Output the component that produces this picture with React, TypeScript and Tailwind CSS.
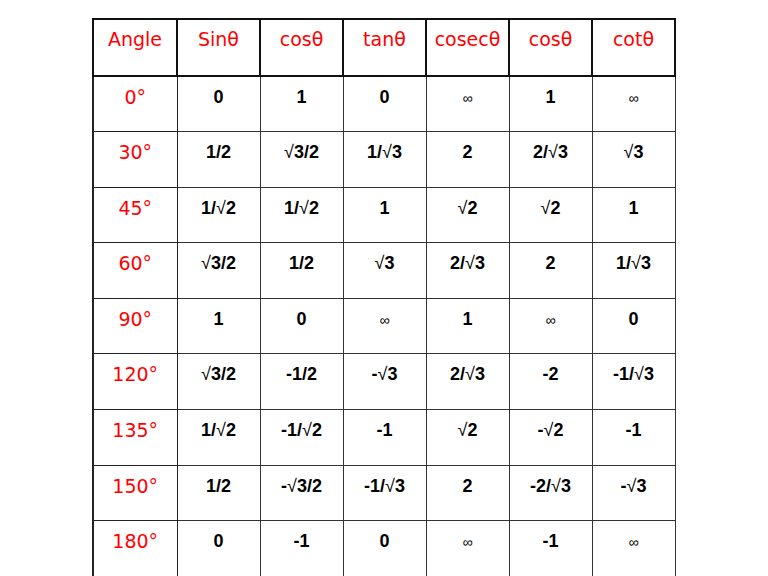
const headers = ['Angle', 'Sinθ', 'cosθ', 'tanθ', 'cosecθ', 'cosθ', 'cotθ'];

const rows: string[][] = [
  ['0°', '0', '1', '0', '∞', '1', '∞'],
  ['30°', '1/2', '√3/2', '1/√3', '2', '2/√3', '√3'],
  ['45°', '1/√2', '1/√2', '1', '√2', '√2', '1'],
  ['60°', '√3/2', '1/2', '√3', '2/√3', '2', '1/√3'],
  ['90°', '1', '0', '∞', '1', '∞', '0'],
  ['120°', '√3/2', '-1/2', '-√3', '2/√3', '-2', '-1/√3'],
  ['135°', '1/√2', '-1/√2', '-1', '√2', '-√2', '-1'],
  ['150°', '1/2', '-√3/2', '-1/√3', '2', '-2/√3', '-√3'],
  ['180°', '0', '-1', '0', '∞', '-1', '∞'],
];

function Value({ v }: { v: string }) {
  if (v === '∞') {
    return <span className="font-normal text-[14px]">∞</span>;
  }
  // the root sign is drawn thin in the picture
  const parts = v.split('√');
  return (
    <span>
      {parts.map((p, i) => (
        <span key={i}>
          {i > 0 && <span className="font-normal">√</span>}
          {p}
        </span>
      ))}
    </span>
  );
}

export default function App() {
  return (
    <div className="w-[768px] h-[576px] overflow-hidden bg-white pt-[18px] pl-[92px]">
      <table className="border-collapse table-fixed w-[583px]">
        <colgroup>
          <col className="w-[84px]" />
          {headers.slice(1).map((_, i) => (
            <col key={i} className="w-[83px]" />
          ))}
        </colgroup>
        <thead>
          <tr className="h-[57px]">
            {headers.map((h, i) => (
              <th
                key={i}
                className="border-2 border-[#111] align-top pt-[5px] text-center font-normal text-[19px] text-[#ff0000] [font-family:'DejaVu_Sans',sans-serif]"
              >
                {h}
              </th>
            ))}
          </tr>
        </thead>
        <tbody>
          {rows.map((row, r) => (
            <tr key={r} className="h-[55.6px]">
              {row.map((v, c) =>
                c === 0 ? (
                  <td
                    key={c}
                    className="border border-[#222] border-l-2 align-top pt-[6px] text-center text-[19px] text-[#ff0000] [font-family:'DejaVu_Sans',sans-serif]"
                  >
                    {v}
                  </td>
                ) : (
                  <td
                    key={c}
                    className="border border-[#333] align-top pt-[7px] text-center text-[18px] font-bold text-black [font-family:'Liberation_Sans',Arial,sans-serif]"
                  >
                    <Value v={v} />
                  </td>
                )
              )}
            </tr>
          ))}
        </tbody>
      </table>
    </div>
  );
}
